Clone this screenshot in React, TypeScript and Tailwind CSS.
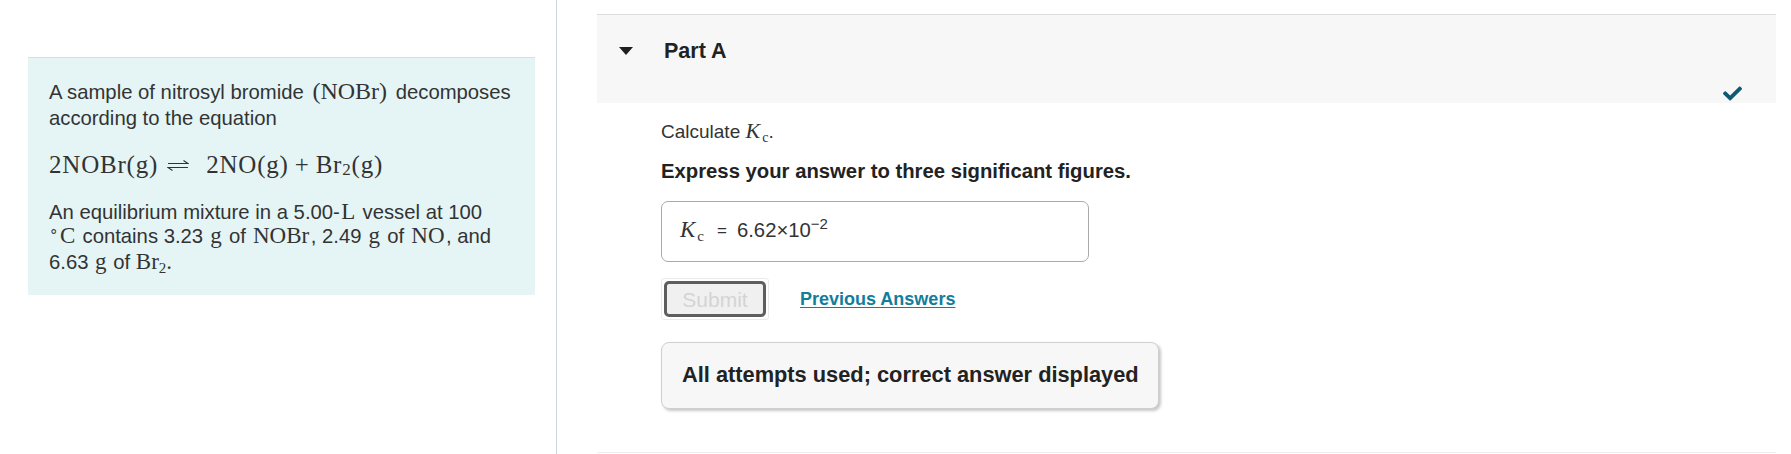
import React from 'react';
import { FaCheck } from 'react-icons/fa';

const M: React.FC<{ children: React.ReactNode; className?: string }> = ({ children, className = 'text-[23px] mx-[1.5px]' }) => (
    <span className={`font-['Liberation_Serif','Times_New_Roman',serif] ${className}`}>{children}</span>
);

const EqArrows = () => (
    <svg width="22" height="11" viewBox="0 0 22 11" className="ml-[9px]">
        <path d="M1 3.5H21L16.5 0.5" fill="none" stroke="#333" strokeWidth="1.1" />
        <path d="M21 7.5H1L5.5 10.5" fill="none" stroke="#333" strokeWidth="1.1" />
    </svg>
);

const Kc: React.FC<{ size: string; sub: string }> = ({ size, sub }) => (
    <span className="font-['Liberation_Serif','Times_New_Roman',serif]">
        <span className={`italic ${size}`}>K</span>
        <span className={`${sub} relative top-[4px] ml-[2px]`}>c</span>
    </span>
);

export default function App() {
    return (
        <div className="flex w-[1791px] h-[454px] bg-white font-['Liberation_Sans',Arial,sans-serif] text-[#333]">
            {/* problem statement */}
            <div className="w-[557px] shrink-0 border-r border-[#c9d6df] pt-[57px] pl-[28px]">
                <div className="w-[507px] bg-[#e5f5f6] border-t border-[#d4e0e3] pl-[21px] pt-[21px] pb-[19px] text-[20.3px] leading-[24px]">
                    <div className="whitespace-nowrap">
                        A sample of nitrosyl bromide <M className="text-[24px] mx-[3px]">(NOBr)</M> decomposes
                    </div>
                    <div className="mt-[2px] whitespace-nowrap">according to the equation</div>
                    <div className="mt-[20px] h-[30px] flex items-center font-['Liberation_Serif','Times_New_Roman',serif] text-[25px] tracking-[0.8px] whitespace-nowrap">
                        <span>2NOBr(g)</span>
                        <EqArrows />
                        <span className="ml-[17px]">2NO(g)</span>
                        <span className="mx-[6px]">+</span>
                        <span>Br</span>
                        <span className="text-[17px] relative top-[5px]">2</span>
                        <span>(g)</span>
                    </div>
                    <p className="mt-[20px] whitespace-nowrap">
                        An equilibrium mixture in a 5.00-<M>L</M> vessel at 100
                        <br />
                        <M className="text-[23px] mr-[1.5px]">
                            <span className="text-[15px] relative -top-[7px] mr-[2px]">∘</span>C
                        </M>{' '}
                        contains 3.23 <M>g</M> of <M>NOBr</M>, 2.49 <M>g</M> of <M>NO</M>, and
                        <br />
                        6.63 <M className="text-[23px] mx-[1px]">g</M> of <M className="text-[23px]">Br</M>
                        <M className="text-[15px] relative top-[4px]">2</M>
                        <M className="text-[23px]">.</M>
                    </p>
                </div>
            </div>

            {/* part A */}
            <div className="flex-1 pl-[40px] pr-[15px] pt-[14px]">
                <section className="h-[439px] border-t border-b border-t-[#dcdcdc] border-b-[#eeeeee]">
                    <div className="h-[88px] bg-[#f7f7f7] flex justify-between pl-[22px] pr-[34px] pt-[24px]">
                        <div className="flex items-center h-[24px]">
                            <svg width="14" height="8" viewBox="0 0 14 8">
                                <path d="M0 0H14L7 8Z" fill="#1f1f1f" />
                            </svg>
                            <span className="ml-[31px] text-[21.5px] font-bold text-[#222] leading-[24px]">Part A</span>
                        </div>
                        <FaCheck className="self-end text-[#0d5a72]" size={19} />
                    </div>

                    <div className="pl-[64px] pt-[16px]">
                        <p className="text-[19px] leading-[24px]">
                            Calculate <Kc size="text-[22px]" sub="text-[14px]" />.
                        </p>
                        <p className="mt-[13px] text-[20.3px] leading-[24px] font-bold text-[#222]">
                            Express your answer to three significant figures.
                        </p>

                        <div className="mt-[18px] w-[428px] h-[61px] border border-[#aaaaaa] rounded-[7px] flex items-center pl-[18px] pb-[2px]">
                            <Kc size="text-[23px]" sub="text-[15px]" />
                            <span className="ml-[13px] text-[17px]">=</span>
                            <span className="ml-[10px] text-[20.3px]">
                                6.62×10
                                <span className="text-[15px] relative -top-[8px]">−2</span>
                            </span>
                        </div>

                        <div className="mt-[16px] flex items-center">
                            <div className="border border-[#ebebeb] p-[2px] rounded-[3px]">
                                <button
                                    disabled
                                    className="w-[102px] h-[36px] border-[3px] border-[#5e5e5e] rounded-[5px] bg-[#f0f0f0] text-[21px] text-[#d4d4d4] leading-none"
                                >
                                    Submit
                                </button>
                            </div>
                            <a className="ml-[31px] text-[18px] font-bold text-[#137d9c] underline underline-offset-[2px]">
                                Previous Answers
                            </a>
                        </div>

                        <div className="mt-[22px] w-[498px] h-[67px] border border-[#cfcfcf] rounded-[8px] bg-[#f7f7f7] shadow-[2px_2px_3px_rgba(0,0,0,0.22)] flex items-center pl-[20px]">
                            <span className="text-[21.8px] font-bold text-[#222]">All attempts used; correct answer displayed</span>
                        </div>
                    </div>
                </section>
            </div>
        </div>
    );
}
